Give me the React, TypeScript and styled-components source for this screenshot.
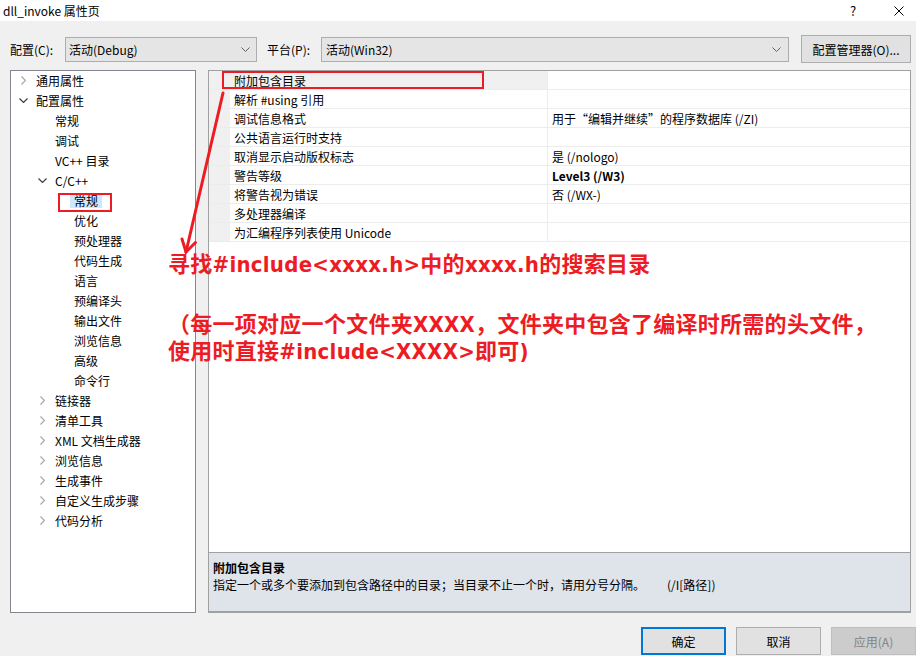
import styled, { createGlobalStyle } from 'styled-components'

const GlobalStyle = createGlobalStyle`
  html, body {
    margin: 0;
    padding: 0;
  }
  body {
    background: #f0f0f0;
    font-family: "Noto Sans CJK SC", "Noto Sans", sans-serif;
    font-size: 12px;
    color: #000;
  }
  * {
    box-sizing: border-box;
  }
`

const RED = '#ed1c24'

const Window = styled.div`
  position: relative;
  width: 916px;
  height: 656px;
  background: #f0f0f0;
  display: flex;
  flex-direction: column;
  overflow: hidden;
`

const TitleBar = styled.div`
  height: 21px;
  flex-shrink: 0;
  background: #fff;
  display: flex;
  align-items: center;
  padding-left: 3px;
`

const Title = styled.span`
  flex: 1;
  line-height: 14px;
`

const CaptionButton = styled.span<{ $last?: boolean }>`
  width: 46px;
  height: 21px;
  display: flex;
  align-items: center;
  justify-content: center;
  font-size: 13px;
  margin-right: ${p => (p.$last ? '-6px' : '0')};
`

const Toolbar = styled.div`
  display: flex;
  align-items: center;
  padding: 14px 5px 7px 10px;
  flex-shrink: 0;
`

const FieldLabel = styled.span<{ $width: number; $gap?: number }>`
  width: ${p => p.$width}px;
  margin-left: ${p => p.$gap ?? 0}px;
  flex-shrink: 0;
  white-space: nowrap;
`

const Combo = styled.div<{ $width?: number; $pad: number }>`
  height: 25px;
  ${p => (p.$width ? `width: ${p.$width}px;` : 'flex: 1;')}
  flex-shrink: 0;
  display: flex;
  align-items: center;
  padding: 0 ${p => p.$pad}px 0 ${p => p.$pad - 3}px;
  background: #e5e5e5;
  border: 1px solid #adadad;
`

const ComboText = styled.span`
  flex: 1;
  white-space: nowrap;
`

const ToolButton = styled.div`
  width: 110px;
  height: 28px;
  margin-left: 12px;
  display: flex;
  align-items: center;
  justify-content: center;
  background: #e1e1e1;
  border: 1px solid #adadad;
  white-space: nowrap;
`

const Main = styled.div`
  flex: 1;
  min-height: 0;
  display: flex;
  gap: 12px;
  padding: 0 5px 0 10px;
`

const TreePanel = styled.div`
  width: 186px;
  flex-shrink: 0;
  background: #fff;
  border: 1px solid #828790;
`

const TreeRow = styled.div<{ $depth: number }>`
  display: flex;
  align-items: center;
  height: 20px;
  padding-bottom: 2px;
  padding-left: ${p => 6 + p.$depth * 19}px;
  white-space: nowrap;
`

const Twisty = styled.span`
  width: 12px;
  height: 18px;
  margin-right: 7px;
  flex-shrink: 0;
  display: flex;
  align-items: center;
  justify-content: center;
`

const TreeLabel = styled.span<{ $selected?: boolean }>`
  line-height: 15px;
  padding: 0 4px;
  margin-left: -4px;
  background: ${p => (p.$selected ? '#cce8ff' : 'transparent')};
`

const RightColumn = styled.div`
  flex: 1;
  min-width: 0;
  display: flex;
  flex-direction: column;
`

const Grid = styled.div`
  flex: 1;
  background: #fff;
  border: 1px solid #a0a0a0;
`

const GridRow = styled.div`
  display: grid;
  grid-template-columns: 21px 318px 1fr;
  height: 19px;
  border-bottom: 1px solid #ececec;
`

const Gutter = styled.div`
  background: #f0f0f0;
`

const NameCell = styled.div<{ $selected?: boolean }>`
  padding-left: 4px;
  line-height: 20px;
  white-space: nowrap;
  overflow: hidden;
  border-right: 1px solid #ececec;
  background: ${p => (p.$selected ? '#f0f0f0' : '#fff')};
`

const ValueCell = styled.div<{ $bold?: boolean }>`
  padding-left: 4px;
  line-height: 20px;
  white-space: nowrap;
  overflow: hidden;
  font-weight: ${p => (p.$bold ? 700 : 400)};
`

const Description = styled.div`
  height: 60px;
  flex-shrink: 0;
  background: #dfe3ea;
  border: 1px solid #a0a0a0;
  border-top: none;
  border-bottom-width: 2px;
  padding: 6px 4px 0;
  line-height: 17px;
`

const DescTitle = styled.div`
  font-weight: 700;
`

const Switch = styled.span`
  margin-left: 22px;
`

const Footer = styled.div`
  height: 43px;
  flex-shrink: 0;
  display: flex;
  justify-content: flex-end;
  gap: 10px;
  padding-top: 14px;
`

const DialogButton = styled.div<{ $variant?: 'default' | 'disabled' }>`
  width: 85px;
  height: 28px;
  display: flex;
  align-items: center;
  justify-content: center;
  background: ${p => (p.$variant === 'disabled' ? '#cccccc' : '#e1e1e1')};
  color: ${p => (p.$variant === 'disabled' ? '#838383' : '#000')};
  border: ${p =>
    p.$variant === 'default' ? '2px solid #0078d7' : p.$variant === 'disabled' ? '1px solid #bfbfbf' : '1px solid #adadad'};
`

// red markup drawn over the dialog
const Overlay = styled.div`
  position: absolute;
  inset: 0;
  pointer-events: none;
`

const RedFrame = styled.div<{ $x: number; $y: number; $w: number; $h: number }>`
  position: absolute;
  left: ${p => p.$x}px;
  top: ${p => p.$y}px;
  width: ${p => p.$w}px;
  height: ${p => p.$h}px;
  border: 2px solid ${RED};
`

const ArrowSvg = styled.svg`
  position: absolute;
  left: 0;
  top: 0;
`

const Note = styled.div`
  position: absolute;
  left: 168px;
  top: 251px;
  color: ${RED};
  font-family: "DejaVu Sans Condensed", "Noto Sans CJK SC", sans-serif;
  font-weight: 700;
  font-size: 22px;
  line-height: 27px;
  letter-spacing: 0.27px;
  white-space: nowrap;
`

const NoteLine = styled.div``

const NoteBody = styled.div`
  margin-top: 33px;
`

type TreeItem = {
  label: string
  depth: number
  toggle?: 'open' | 'closed'
  selected?: boolean
}

const treeItems: TreeItem[] = [
  { label: '通用属性', depth: 0, toggle: 'closed' },
  { label: '配置属性', depth: 0, toggle: 'open' },
  { label: '常规', depth: 1 },
  { label: '调试', depth: 1 },
  { label: 'VC++ 目录', depth: 1 },
  { label: 'C/C++', depth: 1, toggle: 'open' },
  { label: '常规', depth: 2, selected: true },
  { label: '优化', depth: 2 },
  { label: '预处理器', depth: 2 },
  { label: '代码生成', depth: 2 },
  { label: '语言', depth: 2 },
  { label: '预编译头', depth: 2 },
  { label: '输出文件', depth: 2 },
  { label: '浏览信息', depth: 2 },
  { label: '高级', depth: 2 },
  { label: '命令行', depth: 2 },
  { label: '链接器', depth: 1, toggle: 'closed' },
  { label: '清单工具', depth: 1, toggle: 'closed' },
  { label: 'XML 文档生成器', depth: 1, toggle: 'closed' },
  { label: '浏览信息', depth: 1, toggle: 'closed' },
  { label: '生成事件', depth: 1, toggle: 'closed' },
  { label: '自定义生成步骤', depth: 1, toggle: 'closed' },
  { label: '代码分析', depth: 1, toggle: 'closed' },
]

const properties = [
  { name: '附加包含目录', value: '', selected: true },
  { name: '解析 #using 引用', value: '' },
  { name: '调试信息格式', value: '用于“编辑并继续”的程序数据库 (/ZI)' },
  { name: '公共语言运行时支持', value: '' },
  { name: '取消显示启动版权标志', value: '是 (/nologo)' },
  { name: '警告等级', value: 'Level3 (/W3)', bold: true },
  { name: '将警告视为错误', value: '否 (/WX-)' },
  { name: '多处理器编译', value: '' },
  { name: '为汇编程序列表使用 Unicode', value: '' },
]

function Chevron({ open }: { open: boolean }) {
  return open ? (
    <svg width="9" height="5" viewBox="0 0 9 5">
      <polyline points="0.5,0.5 4.5,4.5 8.5,0.5" fill="none" stroke="#404040" strokeWidth="1.2" />
    </svg>
  ) : (
    <svg width="5" height="9" viewBox="0 0 5 9">
      <polyline points="0.5,0.5 4.5,4.5 0.5,8.5" fill="none" stroke="#a6a6a6" strokeWidth="1.2" />
    </svg>
  )
}

function ComboArrow() {
  return (
    <svg width="9" height="5" viewBox="0 0 9 5">
      <polyline points="0.5,0.5 4.5,4.5 8.5,0.5" fill="none" stroke="#606060" strokeWidth="1" />
    </svg>
  )
}

export default function App() {
  return (
    <>
      <GlobalStyle />
      <Window>
        <TitleBar>
          <Title>dll_invoke 属性页</Title>
          <CaptionButton>?</CaptionButton>
          <CaptionButton $last>
            <svg width="10" height="10" viewBox="0 0 10 10">
              <path d="M0.5 0.5 L9.5 9.5 M9.5 0.5 L0.5 9.5" stroke="#000" strokeWidth="1" />
            </svg>
          </CaptionButton>
        </TitleBar>

        <Toolbar>
          <FieldLabel $width={55}>配置(C):</FieldLabel>
          <Combo $width={192} $pad={6}>
            <ComboText>活动(Debug)</ComboText>
            <ComboArrow />
          </Combo>
          <FieldLabel $width={54} $gap={10}>平台(P):</FieldLabel>
          <Combo $pad={7}>
            <ComboText>活动(Win32)</ComboText>
            <ComboArrow />
          </Combo>
          <ToolButton>配置管理器(O)...</ToolButton>
        </Toolbar>

        <Main>
          <TreePanel>
            {treeItems.map((item, i) => (
              <TreeRow key={i} $depth={item.depth}>
                <Twisty>{item.toggle && <Chevron open={item.toggle === 'open'} />}</Twisty>
                <TreeLabel $selected={item.selected}>{item.label}</TreeLabel>
              </TreeRow>
            ))}
          </TreePanel>

          <RightColumn>
            <Grid>
              {properties.map(p => (
                <GridRow key={p.name}>
                  <Gutter />
                  <NameCell $selected={p.selected}>{p.name}</NameCell>
                  <ValueCell $bold={p.bold}>{p.value}</ValueCell>
                </GridRow>
              ))}
            </Grid>
            <Description>
              <DescTitle>附加包含目录</DescTitle>
              <div>
                指定一个或多个要添加到包含路径中的目录；当目录不止一个时，请用分号分隔。
                <Switch>(/I[路径])</Switch>
              </div>
            </Description>
          </RightColumn>
        </Main>

        <Footer>
          <DialogButton $variant="default">确定</DialogButton>
          <DialogButton>取消</DialogButton>
          <DialogButton $variant="disabled">应用(A)</DialogButton>
        </Footer>

        <Overlay>
          <RedFrame $x={222} $y={71} $w={262} $h={18} />
          <RedFrame $x={58} $y={193} $w={54} $h={19} />
          <ArrowSvg width="916" height="656" viewBox="0 0 916 656">
            <g stroke={RED} strokeWidth="3" strokeLinecap="round" fill="none">
              <line x1="223" y1="93" x2="186" y2="252" />
              <polyline points="182,239 186,252 195.5,242.5" />
            </g>
          </ArrowSvg>
          <Note>
            <NoteLine>寻找#include&lt;xxxx.h&gt;中的xxxx.h的搜索目录</NoteLine>
            <NoteBody>
              <NoteLine>（每一项对应一个文件夹XXXX，文件夹中包含了编译时所需的头文件，</NoteLine>
              <NoteLine>使用时直接#include&lt;XXXX&gt;即可)</NoteLine>
            </NoteBody>
          </Note>
        </Overlay>
      </Window>
    </>
  )
}
